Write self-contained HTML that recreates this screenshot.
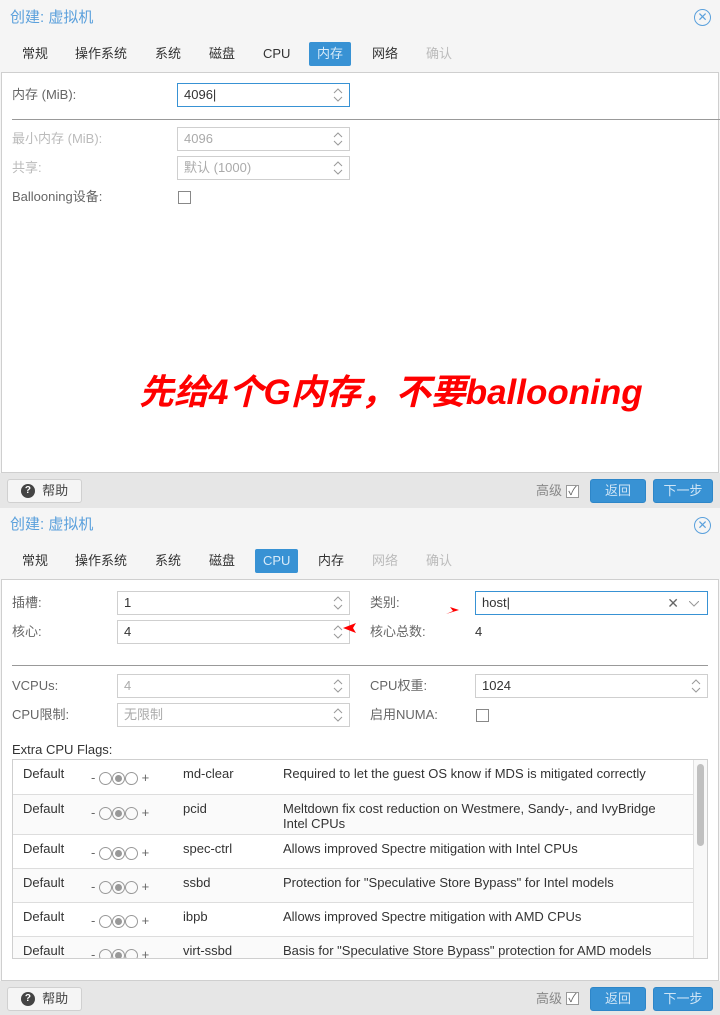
<!DOCTYPE html>
<html><head><meta charset="utf-8"><style>
*{box-sizing:border-box;margin:0;padding:0}
body{width:720px;height:1015px;background:#f5f5f5;font-family:"Liberation Sans","Noto Sans CJK SC",sans-serif;font-size:13px;line-height:16px;color:#333;position:relative;overflow:hidden}
.a{position:absolute;white-space:nowrap}
.title{color:#5aa0dc;font-size:15px;line-height:18px}
.close{width:17px;height:17px;border:1.3px solid #5aa0dc;border-radius:50%;color:#5aa0dc;font-size:12px;line-height:14px;text-align:center}
.tab{height:24px;line-height:24px;font-size:13px;color:#333;padding:0 8px;border-radius:2px}
.tab.on{background:#3892d4;color:#d8ebf9}
.tab.dis{color:#bbb}
.panel{background:#fff;border:1px solid #cfcfcf}
.foot{background:#e6e6e6}
.lbl{color:#666}
.lbl.dis{color:#bbb}
.inp{border:1px solid #cfcfcf;height:24px;line-height:22px;padding-left:6px;background:#fff;color:#333}
.inp.focus{border-color:#3892d4}
.inp.dis{color:#aaa}
.sp{position:absolute;right:6px;top:3px;width:10px;height:16px}
.chk{width:13px;height:13px;border:1px solid #888;background:#fff}
.btn{height:24px;line-height:22px;border-radius:3px;text-align:center}
.help{background:#f5f5f5;border:1px solid #d0d0d0;color:#444}
.blue{background:#3892d4;color:#cfe5f6;border:1px solid #2e86c8}
.hr{height:1px;background:#999}
.row{position:absolute;left:0;width:680px;border-bottom:1px solid #ddd}
.row div{position:absolute;top:6px;line-height:16px}
.radio{display:inline-block;width:13px;height:13px;border:1px solid #999;border-radius:50%;vertical-align:middle;position:relative;margin:0}
.radio.sel::after{content:"";position:absolute;left:2px;top:2px;width:7px;height:7px;border-radius:50%;background:#999}
.q{display:inline-block;width:14px;height:14px;border-radius:50%;background:#444;color:#fff;font-size:10px;line-height:14px;font-weight:bold;vertical-align:middle;position:relative;top:-1px;text-align:center}
</style></head><body>
<svg width="0" height="0" style="position:absolute"><defs><symbol id="spin" viewBox="0 0 10 16"><path d="M1 6 L5 2 L9 6 M1 10 L5 14 L9 10" fill="none" stroke="#999" stroke-width="1"/></symbol></defs></svg>

<div class="a title" style="left:10px;top:9px">创建: 虚拟机</div>
<div class="a close" style="left:694px;top:9px">✕</div>
<div class="a tab" style="left:14px;top:42px">常规</div>
<div class="a tab" style="left:67px;top:42px">操作系统</div>
<div class="a tab" style="left:147px;top:42px">系统</div>
<div class="a tab" style="left:201px;top:42px">磁盘</div>
<div class="a tab" style="left:255px;top:42px">CPU</div>
<div class="a tab on" style="left:309px;top:42px">内存</div>
<div class="a tab" style="left:364px;top:42px">网络</div>
<div class="a tab dis" style="left:418px;top:42px">确认</div>
<div class="a panel" style="left:1px;top:72px;width:718px;height:401px"></div>
<div class="a lbl" style="left:12px;top:87px">内存 (MiB):</div>
<div class="a inp focus" style="left:177px;top:83px;width:173px">4096|<svg class="sp"><use href="#spin"/></svg></div>
<div class="a hr" style="left:12px;top:119px;width:708px"></div>
<div class="a lbl dis" style="left:12px;top:131px">最小内存 (MiB):</div>
<div class="a inp dis" style="left:177px;top:127px;width:173px">4096<svg class="sp"><use href="#spin"/></svg></div>
<div class="a lbl dis" style="left:12px;top:160px">共享:</div>
<div class="a inp dis" style="left:177px;top:156px;width:173px">默认 (1000)<svg class="sp"><use href="#spin"/></svg></div>
<div class="a lbl" style="left:12px;top:189px">Ballooning设备:</div>
<div class="a chk" style="left:178px;top:191px"></div>
<div class="a" style="left:139px;top:371px;font-size:35px;line-height:44px;font-weight:bold;font-style:italic;color:#f00">先给4个G内存，不要ballooning</div>
<div class="a foot" style="left:0;top:473px;width:720px;height:35px"></div>
<div class="a btn help" style="left:7px;top:479px;width:75px"><span class="q">?</span>&nbsp; 帮助</div>
<div class="a" style="left:536px;top:483px;color:#888">高级</div>
<div class="a chk" style="left:566px;top:485px;border-color:#999;font-size:12px;line-height:11px;color:#666;text-align:center">✓</div>
<div class="a btn blue" style="left:590px;top:479px;width:56px">返回</div>
<div class="a btn blue" style="left:653px;top:479px;width:60px">下一步</div>

<div class="a title" style="left:10px;top:516px">创建: 虚拟机</div>
<div class="a close" style="left:694px;top:517px">✕</div>
<div class="a tab" style="left:14px;top:549px">常规</div>
<div class="a tab" style="left:67px;top:549px">操作系统</div>
<div class="a tab" style="left:147px;top:549px">系统</div>
<div class="a tab" style="left:201px;top:549px">磁盘</div>
<div class="a tab on" style="left:255px;top:549px">CPU</div>
<div class="a tab" style="left:310px;top:549px">内存</div>
<div class="a tab dis" style="left:364px;top:549px">网络</div>
<div class="a tab dis" style="left:418px;top:549px">确认</div>
<div class="a panel" style="left:1px;top:579px;width:718px;height:402px"></div>
<div class="a lbl" style="left:12px;top:595px">插槽:</div>
<div class="a inp" style="left:117px;top:591px;width:233px">1<svg class="sp"><use href="#spin"/></svg></div>
<div class="a lbl" style="left:12px;top:624px">核心:</div>
<div class="a inp" style="left:117px;top:620px;width:233px">4<svg class="sp"><use href="#spin"/></svg></div>
<svg class="a" style="left:343px;top:622px" width="14" height="12"><path d="M0 6 L13 1 L10 6 L13 11 Z" fill="#f00"/></svg>
<div class="a lbl" style="left:370px;top:595px">类别:</div>
<svg class="a" style="left:446px;top:606px" width="14" height="10"><path d="M0 8 L13 4 L4 1 L7 5 Z" fill="#f00"/></svg>
<div class="a inp focus" style="left:475px;top:591px;width:233px">host|<span style="position:absolute;right:28px;top:0;color:#666;font-size:14px">✕</span><svg style="position:absolute;right:8px;top:9px" width="10" height="6"><path d="M0 0 L5 5 L10 0" fill="none" stroke="#999"/></svg></div>
<div class="a lbl" style="left:370px;top:624px">核心总数:</div>
<div class="a" style="left:475px;top:624px">4</div>
<div class="a hr" style="left:12px;top:665px;width:696px"></div>
<div class="a lbl" style="left:12px;top:678px">VCPUs:</div>
<div class="a inp dis" style="left:117px;top:674px;width:233px">4<svg class="sp"><use href="#spin"/></svg></div>
<div class="a lbl" style="left:12px;top:707px">CPU限制:</div>
<div class="a inp dis" style="left:117px;top:703px;width:233px">无限制<svg class="sp"><use href="#spin"/></svg></div>
<div class="a lbl" style="left:370px;top:678px">CPU权重:</div>
<div class="a inp" style="left:475px;top:674px;width:233px">1024<svg class="sp"><use href="#spin"/></svg></div>
<div class="a lbl" style="left:370px;top:707px">启用NUMA:</div>
<div class="a chk" style="left:476px;top:709px"></div>
<div class="a" style="left:12px;top:742px">Extra CPU Flags:</div>
<div class="a" style="left:12px;top:759px;width:696px;height:200px;border:1px solid #cfcfcf;background:#fff;overflow:hidden">
 <div class="row" style="top:0;height:35px;background:#fff"><div style="left:10px">Default</div><div style="left:78px;top:10px;color:#666">- <span class="radio"></span><span class="radio sel"></span><span class="radio"></span> +</div><div style="left:170px">md-clear</div><div style="left:270px">Required to let the guest OS know if MDS is mitigated correctly</div></div>
 <div class="row" style="top:35px;height:40px;background:#fafafa"><div style="left:10px">Default</div><div style="left:78px;top:10px;color:#666">- <span class="radio"></span><span class="radio sel"></span><span class="radio"></span> +</div><div style="left:170px">pcid</div><div style="left:270px;line-height:15px">Meltdown fix cost reduction on Westmere, Sandy-, and IvyBridge<br>Intel CPUs</div></div>
 <div class="row" style="top:75px;height:34px;background:#fff"><div style="left:10px">Default</div><div style="left:78px;top:10px;color:#666">- <span class="radio"></span><span class="radio sel"></span><span class="radio"></span> +</div><div style="left:170px">spec-ctrl</div><div style="left:270px">Allows improved Spectre mitigation with Intel CPUs</div></div>
 <div class="row" style="top:109px;height:34px;background:#fafafa"><div style="left:10px">Default</div><div style="left:78px;top:10px;color:#666">- <span class="radio"></span><span class="radio sel"></span><span class="radio"></span> +</div><div style="left:170px">ssbd</div><div style="left:270px">Protection for "Speculative Store Bypass" for Intel models</div></div>
 <div class="row" style="top:143px;height:34px;background:#fff"><div style="left:10px">Default</div><div style="left:78px;top:10px;color:#666">- <span class="radio"></span><span class="radio sel"></span><span class="radio"></span> +</div><div style="left:170px">ibpb</div><div style="left:270px">Allows improved Spectre mitigation with AMD CPUs</div></div>
 <div class="row" style="top:177px;height:34px;background:#fafafa"><div style="left:10px">Default</div><div style="left:78px;top:10px;color:#666">- <span class="radio"></span><span class="radio sel"></span><span class="radio"></span> +</div><div style="left:170px">virt-ssbd</div><div style="left:270px">Basis for "Speculative Store Bypass" protection for AMD models</div></div>
 <div style="position:absolute;left:680px;top:0;width:15px;height:200px;background:#f8f8f8;border-left:1px solid #e0e0e0"></div>
 <div style="position:absolute;left:684px;top:4px;width:7px;height:82px;background:#c0c0c0;border-radius:4px"></div>
</div>
<div class="a foot" style="left:0;top:981px;width:720px;height:34px"></div>
<div class="a btn help" style="left:7px;top:987px;width:75px"><span class="q">?</span>&nbsp; 帮助</div>
<div class="a" style="left:536px;top:991px;color:#888">高级</div>
<div class="a chk" style="left:566px;top:992px;border-color:#999;font-size:12px;line-height:11px;color:#666;text-align:center">✓</div>
<div class="a btn blue" style="left:590px;top:987px;width:56px">返回</div>
<div class="a btn blue" style="left:653px;top:987px;width:60px">下一步</div>
</body></html>
